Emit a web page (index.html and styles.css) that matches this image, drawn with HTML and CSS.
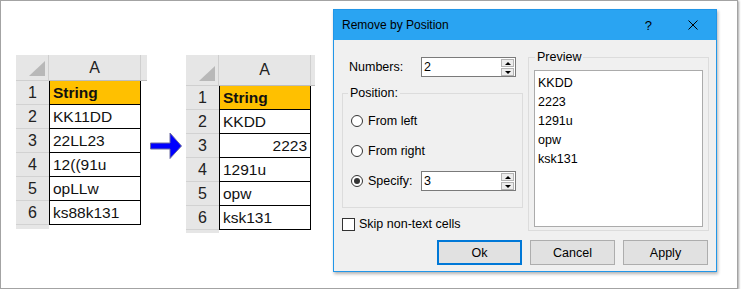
FILE: index.html
```html
<!DOCTYPE html>
<html lang="en">
<head>
    <meta charset="UTF-8">
    <title>Remove by Position</title>
    <link rel="stylesheet" href="styles.css">
</head>
<body>

<div class="frame">
    <div class="sheet before">
        <div class="corner"></div><div class="colhead">A</div><div class="colhead stub"></div>
        <div class="rownum">1</div><div class="cell title">String</div><div></div>
        <div class="rownum">2</div><div class="cell">KK11DD</div><div></div>
        <div class="rownum">3</div><div class="cell">22LL23</div><div></div>
        <div class="rownum">4</div><div class="cell">12((91u</div><div></div>
        <div class="rownum">5</div><div class="cell">opLLw</div><div></div>
        <div class="rownum">6</div><div class="cell">ks88k131</div><div></div>
        <div class="rownum tail"></div><div></div><div></div>
    </div>

    <svg class="arrow" width="32" height="28" viewBox="0 0 32 28">
        <polygon points="0.5,11 20,11 20,1 31.5,14 20,26.5 20,17 0.5,17" fill="#0000ff" stroke="#6f6fa0" stroke-width="1"/>
    </svg>

    <div class="sheet after">
        <div class="corner"></div><div class="colhead">A</div><div class="colhead stub"></div>
        <div class="rownum">1</div><div class="cell title">String</div><div></div>
        <div class="rownum">2</div><div class="cell">KKDD</div><div></div>
        <div class="rownum">3</div><div class="cell num">2223</div><div></div>
        <div class="rownum">4</div><div class="cell">1291u</div><div></div>
        <div class="rownum">5</div><div class="cell">opw</div><div></div>
        <div class="rownum">6</div><div class="cell">ksk131</div><div></div>
        <div class="rownum tail"></div><div></div><div></div>
    </div>

    <div class="dialog">
        <div class="titlebar">
            <span class="title">Remove by Position</span>
            <span class="help">?</span>
            <svg class="close" width="10" height="10" viewBox="0 0 10 10">
                <path d="M0.5 0.5 L9.5 9.5 M9.5 0.5 L0.5 9.5" stroke="#000" stroke-width="1"/>
            </svg>
        </div>
        <div class="dlg-body">
            <div class="panes">
                <div class="left-pane">
                    <div class="field-row">
                        <span class="field-label">Numbers:</span>
                        <div class="spin">
                            <span class="spin-value">2</span>
                            <div class="spin-btns"><span class="spin-up"></span><span class="spin-down"></span></div>
                        </div>
                    </div>
                    <fieldset class="group position">
                        <legend>Position:</legend>
                        <div class="group-inner">
                            <div class="radio-row"><span class="radio"></span>From left</div>
                            <div class="radio-row"><span class="radio"></span>From right</div>
                            <div class="radio-row">
                                <span class="radio-label"><span class="radio checked"></span>Specify:</span>
                                <div class="spin">
                                    <span class="spin-value">3</span>
                                    <div class="spin-btns"><span class="spin-up"></span><span class="spin-down"></span></div>
                                </div>
                            </div>
                        </div>
                    </fieldset>
                    <div class="check-row"><span class="checkbox"></span>Skip non-text cells</div>
                </div>
                <fieldset class="group preview">
                    <legend>Preview</legend>
                    <div class="list">
                        <div>KKDD</div>
                        <div>2223</div>
                        <div>1291u</div>
                        <div>opw</div>
                        <div>ksk131</div>
                    </div>
                </fieldset>
            </div>
            <div class="buttons">
                <button class="btn default">Ok</button>
                <button class="btn">Cancel</button>
                <button class="btn">Apply</button>
            </div>
        </div>
    </div>
</div>

</body>
</html>
```

FILE: styles.css
```css
body {
    margin: 0;
    background-color: #fff;
    font-family: "Liberation Sans", Arial, sans-serif;
}
.frame {
    box-sizing: border-box;
    width: 738px;
    height: 289px;
    border: 1px solid #a3a3a3;
    box-shadow: 1px 1px 2px rgba(0, 0, 0, 0.35);
    padding: 8px 0 0 15px;
    display: flex;
    align-items: flex-start;
}

/* spreadsheets */
.sheet {
    display: grid;
    margin-top: 46px;
    font-size: 15.5px;
    color: #111;
}
.sheet.before {
    grid-template-columns: 33px 92px 6px;
    grid-template-rows: 26px repeat(6, 24px) 4px;
}
.sheet.after {
    margin-left: 4px;
    grid-template-columns: 33px 92px 4px;
    grid-template-rows: 31px repeat(6, 24px) 3px;
}
.corner {
    position: relative;
    background-color: #e6e6e6;
    border-right: 1px solid #cfcfcf;
    border-bottom: 1px solid #cfcfcf;
}
.corner::after {
    content: "";
    position: absolute;
    right: 3px;
    bottom: 4px;
    width: 16px;
    height: 15px;
    background-color: #b8b8b8;
    clip-path: polygon(100% 0, 100% 100%, 0 100%);
}
.colhead {
    background-color: #e6e6e6;
    border-right: 1px solid #cfcfcf;
    border-bottom: 1px solid #bdbdbd;
    display: flex;
    align-items: center;
    justify-content: center;
    color: #222;
    font-size: 16px;
}
.colhead.stub {
    border-right: none;
}
.rownum {
    background-color: #e6e6e6;
    border-bottom: 1px solid #d2d2d2;
    display: flex;
    align-items: center;
    justify-content: center;
    color: #222;
    font-size: 16px;
}
.rownum.tail {
    border-bottom: none;
}
.cell {
    border-left: 1px solid #000;
    border-right: 1px solid #000;
    border-bottom: 1px solid #000;
    display: flex;
    align-items: center;
    padding-left: 3px;
    background-color: #fff;
}
.cell.title {
    background-color: #ffc000;
    font-weight: bold;
}
.cell.num {
    justify-content: flex-end;
    padding-right: 3px;
}
.arrow {
    margin-top: 123px;
    margin-left: 3px;
}

/* dialog */
.dialog {
    margin-left: 18px;
    width: 384px;
    height: 263px;
    box-sizing: border-box;
    border: 1px solid #2196e8;
    background-color: #f0f0f0;
    box-shadow: 1px 2px 3px rgba(0, 0, 0, 0.3);
    font-size: 12.5px;
    color: #000;
}
.titlebar {
    height: 30px;
    background-color: #2aa4f2;
    display: flex;
    align-items: center;
    padding-left: 8px;
    font-size: 12px;
}
.title {
    flex: 1;
}
.help {
    margin-right: 36px;
    font-size: 13px;
}
.close {
    margin-right: 18px;
}
.dlg-body {
    padding: 0 7px 0 8px;
}
.panes {
    display: flex;
    align-items: flex-start;
    gap: 5px;
}
.left-pane {
    width: 181px;
    padding-top: 17px;
}
.field-row {
    display: flex;
    align-items: center;
    height: 20px;
}
.field-label {
    width: 72px;
    padding-left: 7px;
}
.spin {
    box-sizing: border-box;
    width: 95px;
    height: 20px;
    border: 1px solid #7a7a7a;
    background-color: #fff;
    display: flex;
    align-items: center;
    justify-content: space-between;
}
.spin-value {
    padding-left: 2px;
}
.spin-btns {
    display: flex;
    flex-direction: column;
    gap: 1px;
    margin-right: 1px;
}
.spin-up, .spin-down {
    box-sizing: border-box;
    width: 13px;
    height: 8px;
    border: 1px solid #b4b4b4;
    background-color: #ededed;
    position: relative;
}
.spin-up::after, .spin-down::after {
    content: "";
    position: absolute;
    left: 3px;
    top: 2px;
    border-left: 3px solid transparent;
    border-right: 3px solid transparent;
}
.spin-up::after {
    border-bottom: 3px solid #000;
}
.spin-down::after {
    border-top: 3px solid #000;
}
.group {
    margin: 0;
    padding: 0;
    border: 1px solid #dcdcdc;
    min-inline-size: 0;
    box-sizing: border-box;
}
.group legend {
    padding: 0 2px;
    line-height: 14px;
}
.position {
    margin-top: 9px;
    height: 122px;
}
.position legend {
    margin-left: 5px;
}
.group-inner {
    padding: 11px 0 0 8px;
    display: flex;
    flex-direction: column;
    gap: 10px;
}
.radio-row {
    height: 20px;
    display: flex;
    align-items: center;
}
.radio-label {
    width: 70px;
    display: flex;
    align-items: center;
}
.radio {
    box-sizing: border-box;
    width: 12px;
    height: 12px;
    border: 1px solid #333;
    border-radius: 50%;
    background-color: #fff;
    margin-right: 5px;
    display: flex;
    align-items: center;
    justify-content: center;
}
.radio.checked::after {
    content: "";
    width: 6px;
    height: 6px;
    border-radius: 50%;
    background-color: #333;
}
.check-row {
    margin-top: 9px;
    height: 14px;
    display: flex;
    align-items: center;
}
.checkbox {
    box-sizing: border-box;
    width: 13px;
    height: 13px;
    border: 1px solid #333;
    background-color: #fff;
    margin-right: 4px;
}
.preview {
    margin-top: 10px;
    width: 181px;
    height: 181px;
    padding: 6px 5px 3px;
}
.preview legend {
    margin-left: 1px;
}
.list {
    box-sizing: border-box;
    height: 157px;
    border: 1px solid #ababab;
    background-color: #fff;
    padding: 3px 3px;
    line-height: 19px;
}
.buttons {
    margin-top: 9px;
    margin-right: 1px;
    display: flex;
    justify-content: flex-end;
    gap: 8px;
}
.btn {
    box-sizing: border-box;
    width: 85px;
    height: 25px;
    border: 1px solid #adadad;
    background-color: #e1e1e1;
    font-family: "Liberation Sans", Arial, sans-serif;
    font-size: 12.5px;
    color: #000;
    padding: 0;
}
.btn.default {
    border: 2px solid #0078d7;
}
```
